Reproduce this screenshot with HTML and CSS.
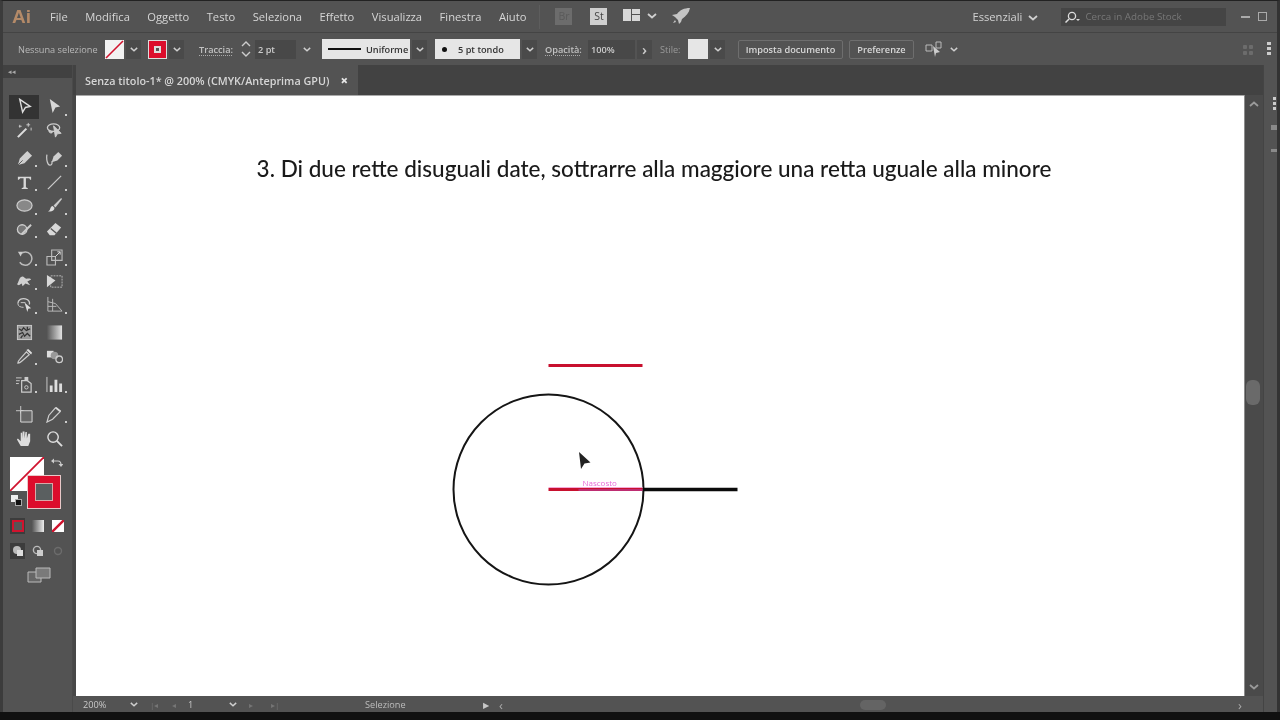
FILE: index.html
```html
<!DOCTYPE html>
<html lang="it">
<head>
  <meta charset="UTF-8">
  <meta name="viewport" content="width=device-width, initial-scale=1.0">
  <title>Adobe Illustrator</title>
  <link rel="stylesheet" href="styles.css">
</head>
<body>
  <svg class="defs">
    <symbol id="chev" viewBox="0 0 10 6"><path d="M1 1l4 3.5L9 1" fill="none" stroke="currentColor" stroke-width="1.8"/></symbol>
  </svg>
  <div class="app">
    <!-- barra menu -->
    <header class="menubar">
      <span class="logo">Ai</span>
      <nav class="menu">
        <span>File</span><span>Modifica</span><span>Oggetto</span><span>Testo</span><span>Seleziona</span><span>Effetto</span><span>Visualizza</span><span>Finestra</span><span>Aiuto</span>
      </nav>
      <i class="vsep"></i>
      <span class="app-badge dim">Br</span>
      <span class="app-badge">St</span>
      <svg class="layout-icon" viewBox="0 0 17 12"><path fill="#d8d8d8" d="M0 0h8v12H0zM9 0h8v5H9zM9 6h8v6H9z"/></svg>
      <svg class="chev chev-layout"><use href="#chev"/></svg>
      <svg class="rocket" viewBox="0 0 18 16"><path fill="#c4c4c4" d="M18 0C12 0 8 2 5 6L0 7l3 2 3 3 1 4 2-2 1-3c4-3 7-6 8-11zM3 12l-2 3 3-1z"/></svg>
      <span class="workspace">Essenziali</span>
      <svg class="chev chev-work"><use href="#chev"/></svg>
      <div class="search">
        <svg viewBox="0 0 16 12"><circle cx="8" cy="5" r="3.6" fill="none" stroke="#ddd" stroke-width="1.3"/><path d="M5 8L1.5 11.5" stroke="#ddd" stroke-width="1.5"/><path d="M12 8h4l-2 2z" fill="#ddd"/></svg>
        <span>Cerca in Adobe Stock</span>
      </div>
      <div class="winctl"><i></i><b></b></div>
    </header>

    <!-- barra opzioni -->
    <section class="options">
      <span class="opt-label sel-label">Nessuna selezione</span>
      <svg class="swatch fill-swatch" viewBox="0 0 19 19"><rect width="19" height="19" fill="#f2f2f2"/><path d="M1 18L18 1" stroke="#d0132e" stroke-width="1.6"/></svg>
      <span class="ddbtn"><svg class="chev"><use href="#chev"/></svg></span>
      <span class="stroke-swatch"><i></i></span>
      <span class="ddbtn"><svg class="chev"><use href="#chev"/></svg></span>
      <span class="opt-label link traccia">Traccia:</span>
      <svg class="stepper" viewBox="0 0 10 18"><path d="M1 6l4-4 4 4M1 12l4 4 4-4" fill="none" stroke="#ccc" stroke-width="1.4"/></svg>
      <span class="field pt-field">2 pt</span>
      <span class="ddbtn pt-dd"><svg class="chev"><use href="#chev"/></svg></span>
      <span class="light-field uniform"><i class="stroke-sample"></i>Uniforme</span>
      <span class="ddbtn"><svg class="chev"><use href="#chev"/></svg></span>
      <span class="light-field brush"><i class="dot"></i>5 pt tondo</span>
      <span class="ddbtn"><svg class="chev"><use href="#chev"/></svg></span>
      <span class="opt-label link opacity">Opacità:</span>
      <span class="field op-field">100%</span>
      <span class="ddbtn arrow-dd">›</span>
      <span class="opt-label style-label">Stile:</span>
      <span class="style-swatch"></span>
      <span class="ddbtn"><svg class="chev"><use href="#chev"/></svg></span>
      <span class="btn doc-btn">Imposta documento</span>
      <span class="btn pref-btn">Preferenze</span>
      <svg class="arrange" viewBox="0 0 18 17"><path fill="none" stroke="#bbb" d="M1 4h6v6H1zM11 1h5v6h-5z"/><path fill="#ccc" d="M8 5l7 6-4 1-1 4z"/></svg>
      <svg class="chev chev-arr"><use href="#chev"/></svg>
      <span class="grip-dots"></span>
      <span class="grip-right"></span>
    </section>

    <main class="work">
      <!-- strumenti -->
      <aside class="toolbar">
        <div class="toolbar-head">◂◂</div>
        <div class="toolbar-grip"></div>

        <div class="tools">
          <span class="tool active"><svg viewBox="0 0 18 18"><path d="M4 1.500l11 7.500-5 1-3 5z" fill="none" stroke="#ddd" stroke-width="1.5"/></svg></span>
          <span class="tool more"><svg viewBox="0 0 18 18"><path d="M4 1l11 8-5 1-3 6z" fill="#d8d8d8"/></svg></span>
          <span class="tool"><svg viewBox="0 0 18 18"><path d="M2 16L11 7" stroke="#ddd" stroke-width="2.2"/><path d="M13 1v4M11 3h4M16 6v3M4 3v3M3 4.500h3" stroke="#ccc"/></svg></span>
          <span class="tool"><svg viewBox="0 0 18 18"><ellipse cx="8" cy="6" rx="6.500" ry="4" fill="none" stroke="#ccc" stroke-width="1.4"/><path d="M3 9c0 3 3 3 4 2M8 4l8 8-4 .5-2 3.500z" fill="#ccc" stroke="#ccc"/></svg></span>
        </div>

        <div class="tools">
          <span class="tool more"><svg viewBox="0 0 18 18"><path d="M2 16l2-7 6-6 5 5-6 6zM10 3l2-2 5 5-2 2" fill="#cfcfcf"/><path d="M2 16l5-5" stroke="#555"/></svg></span>
          <span class="tool more"><svg viewBox="0 0 18 18"><path d="M6 13l2-6 5-5 4 4-5 5z" fill="#cfcfcf"/><path d="M1 5c-1 6 1 11 3 11s3-2 2-4" fill="none" stroke="#ccc" stroke-width="1.3"/></svg></span>
          <span class="tool more"><svg viewBox="0 0 18 18"><path d="M2 3h14v3h-1l-1-1.500h-3.500V14l2 1v1H6v-1l2-1V4.500H4.500L3 6H2z" fill="#d8d8d8"/></svg></span>
          <span class="tool more"><svg viewBox="0 0 18 18"><path d="M2 16L16 2" stroke="#ccc" stroke-width="1.3"/></svg></span>
          <span class="tool more"><svg viewBox="0 0 18 18"><ellipse cx="9" cy="9" rx="8" ry="6" fill="#888" stroke="#ccc" stroke-width="1.3"/></svg></span>
          <span class="tool more"><svg viewBox="0 0 18 18"><path d="M8 9l8-8 1 1-7 9z" fill="#ccc"/><path d="M2 15c3 0 2-5 5-5.500l2 2C9 15 5 16 2 15z" fill="#ddd"/></svg></span>
          <span class="tool more"><svg viewBox="0 0 18 18"><circle cx="6.500" cy="9" r="5" fill="#777" stroke="#ccc" stroke-width="1.400"/><path d="M6 14L16 4" stroke="#ccc" stroke-width="2"/></svg></span>
          <span class="tool more"><svg viewBox="0 0 18 18"><path d="M10 2l6 5-7 8H4l-3-4z" fill="#d8d8d8"/><path d="M5 8l6 5" stroke="#555" stroke-width="1.400"/></svg></span>
        </div>

        <div class="tools">
          <span class="tool more"><svg viewBox="0 0 18 18"><path d="M5 5a7 7 0 1 1-1 9" fill="none" stroke="#bbb" stroke-width="1.600"/><path d="M2 3l5 0-2 5z" fill="#ccc"/></svg></span>
          <span class="tool more"><svg viewBox="0 0 18 18"><path d="M1 8h9v9H1zM6 1h11v11H6z" fill="none" stroke="#bbb" stroke-width="1.200"/><path d="M10 8l5-5M12 3h3v3" fill="none" stroke="#ddd"/></svg></span>
          <span class="tool more"><svg viewBox="0 0 18 18"><path d="M1 12c2-2 2-7 5-8 2-1 3 2 5 2s4-1 5 1l-4 2 3 4-5-2-3 3-1-3-3 2z" fill="#d0d0d0"/></svg></span>
          <span class="tool"><svg viewBox="0 0 18 18"><path d="M5 3h12v12H5z" fill="none" stroke="#bbb" stroke-dasharray="2 1"/><path d="M1 2l9 6-9 7z" fill="#d8d8d8"/></svg></span>
          <span class="tool more"><svg viewBox="0 0 18 18"><path d="M2 8c0-4 4-6 8-5s5 4 4 6" fill="none" stroke="#ccc" stroke-width="1.400"/><path d="M2 8c0 3 3 4 6 4M5 7h5" fill="none" stroke="#ccc"/><path d="M9 7l7 6-3 .5-1 3.500z" fill="#ddd"/></svg></span>
          <span class="tool more"><svg viewBox="0 0 18 18"><path d="M2 1v15h15M2 6l8 2 7 8M2 11h9M7 3v13" fill="none" stroke="#bbb"/></svg></span>
        </div>

        <div class="tools">
          <span class="tool"><svg viewBox="0 0 18 18"><rect x="1.500" y="1.500" width="15" height="15" fill="#999" stroke="#ccc"/><path d="M3 5l3 2 2-3 3 3 4-2M3 11l4-2 2 4 3-3 3 3M5 15l2-3M12 3v3" fill="none" stroke="#333" stroke-width="1.300"/></svg></span>
          <span class="tool"><svg viewBox="0 0 18 18"><defs><linearGradient id="grad"><stop offset="0" stop-color="#555"/><stop offset="1" stop-color="#e2e2e2"/></linearGradient></defs><rect x="1" y="1.500" width="16" height="15" fill="url(#grad)"/></svg></span>
          <span class="tool more"><svg viewBox="0 0 18 18"><path d="M2 16c0-2 1-3 2-4l7-8 3 3-8 7c-1 1-2 2-4 2z" fill="none" stroke="#ccc" stroke-width="1.300"/><path d="M11 2l2-1 4 4-1 2z" fill="#ddd"/></svg></span>
          <span class="tool"><svg viewBox="0 0 18 18"><path d="M1 3h7v7H1z" fill="#ddd"/><circle cx="9" cy="8" r="4" fill="#999"/><circle cx="14" cy="12" r="3.500" fill="none" stroke="#ccc" stroke-width="1.400"/></svg></span>
        </div>

        <div class="tools">
          <span class="tool more"><svg viewBox="0 0 18 18"><path d="M0 2h6M0 5h4M0 8h3" stroke="#ccc"/><path d="M6 5h6l4 3v9H6z" fill="none" stroke="#ccc" stroke-width="1.300"/><path d="M9 1h4v4H9z" fill="#ccc"/><circle cx="11" cy="12" r="1.800" fill="none" stroke="#ccc"/></svg></span>
          <span class="tool more"><svg viewBox="0 0 18 18"><path d="M1 1v16" stroke="#ccc"/><path d="M4 10h3v7H4zM9 4h3v13H9zM14 8h3v9h-3z" fill="#ddd"/></svg></span>
        </div>

        <div class="tools tools-last">
          <span class="tool"><svg viewBox="0 0 18 18"><path d="M5 0v8M0 5h8" stroke="#ccc"/><path d="M5 5h12v12H5z" fill="#666" stroke="#ddd"/></svg></span>
          <span class="tool more"><svg viewBox="0 0 18 18"><path d="M1 17l2-7 7-8 5 4-8 8z" fill="none" stroke="#ccc" stroke-width="1.300"/><path d="M10 2l1-1 5 4-1 1z" fill="#ddd"/></svg></span>
          <span class="tool"><svg viewBox="0 0 18 18"><path d="M5 17l-4-7 1-1 3 3V3h1.500l.5 6V1.500h2V9l1-7h1.500v7l1.500-5H15v8l-2 5z" fill="#ddd"/></svg></span>
          <span class="tool"><svg viewBox="0 0 18 18"><circle cx="7.500" cy="7.500" r="5.500" fill="none" stroke="#ddd" stroke-width="1.500"/><path d="M11.500 11.500L17 17" stroke="#ddd" stroke-width="2"/></svg></span>
        </div>

        <!-- riempimento e traccia -->
        <div class="colors">
          <svg class="color-fill" viewBox="0 0 34 34"><rect width="34" height="34" fill="#fff"/><path d="M0 34L34 0" stroke="#d0132e" stroke-width="1.800"/></svg>
          <span class="color-stroke"><i></i></span>
          <svg class="color-swap" viewBox="0 0 12 12"><path d="M1 3h6c2 0 3 1 3 4" fill="none" stroke="#ccc" stroke-width="1.200"/><path d="M3 0.500v5L0 3zM7.500 6h5L10 9z" fill="#ccc"/></svg>
          <span class="color-default"><i></i><b></b></span>
        </div>

        <div class="mini-row">
          <span class="mini mini-on"><i class="mini-color"></i></span>
          <span class="mini"><i class="mini-grad"></i></span>
          <span class="mini"><svg viewBox="0 0 12 12"><rect width="12" height="12" fill="#fff"/><path d="M0 12L12 0" stroke="#d0132e" stroke-width="2.400"/></svg></span>
        </div>
        <div class="mini-row draw-row">
          <span class="mini mini-on"><svg viewBox="0 0 12 12"><circle cx="5" cy="5" r="4" fill="#bbb"/><rect x="5" y="5" width="6" height="6" fill="#ddd"/></svg></span>
          <span class="mini"><svg viewBox="0 0 12 12"><circle cx="5" cy="5" r="3.600" fill="none" stroke="#bbb" stroke-width="1.400"/><rect x="5" y="5" width="6" height="6" fill="#ccc"/></svg></span>
          <span class="mini"><svg viewBox="0 0 12 12"><circle cx="6" cy="6" r="3.500" fill="none" stroke="#6c6c6c" stroke-width="1.400"/></svg></span>
        </div>
        <svg class="screen-mode" viewBox="0 0 24 16"><path d="M1 5h13v10H1z" fill="#666" stroke="#bbb"/><path d="M9 1h14v10H9z" fill="#7a7a7a" stroke="#bbb"/></svg>
      </aside>

      <div class="doc-area">
        <div class="tabbar">
          <div class="tab"><span>Senza titolo-1* @ 200% (CMYK/Anteprima GPU)</span><b>×</b></div>
        </div>

        <div class="canvas-row">
          <div class="canvas">
            <h1 class="title">3. Di due rette disuguali date, sottrarre alla maggiore una retta uguale alla minore</h1>
            <svg class="drawing" viewBox="76 96 1167 600">
              <path d="M548 365.500H642" stroke="#c8102e" stroke-width="3"/>
              <circle cx="548" cy="489.500" r="95" fill="none" stroke="#151515" stroke-width="2"/>
              <path d="M642 489.500H737" stroke="#0a0a0a" stroke-width="3.400"/>
              <path d="M548 489.500H642" stroke="#c8102e" stroke-width="3"/>
              <path d="M578 490H642" stroke="#b05ad8" stroke-width="1" opacity=".8"/>
              <path d="M548 487.500H642" stroke="#f6a8d8" stroke-width="1"/>
              <text class="hint" x="582" y="486">Nascosto</text>
              <path d="M578.500 452L590 462.500l-6 1-3.500 5.500z" fill="#222"/>
            </svg>
          </div>
          <div class="vscroll">
            <svg class="chev"><use href="#chev"/></svg>
            <i class="vthumb"></i>
            <svg class="chev"><use href="#chev"/></svg>
          </div>
        </div>

        <footer class="status">
          <span class="zoom-val">200%</span>
          <svg class="chev"><use href="#chev"/></svg>
          <span class="nav dim-nav">|◂</span>
          <span class="nav dim-nav">◂</span>
          <span class="page-val">1</span>
          <svg class="chev"><use href="#chev"/></svg>
          <span class="nav dim-nav">▸</span>
          <span class="nav dim-nav">▸|</span>
          <span class="status-tool">Selezione</span>
          <span class="play">▶</span>
          <span class="hscroll">
            <span class="h-left">‹</span>
            <i class="hthumb"></i>
            <span class="h-right">›</span>
          </span>
        </footer>
      </div>

      <!-- pannelli chiusi -->
      <aside class="dock">
        <i class="dock-dots"></i>
        <i class="dock-line"></i>
        <i class="dock-line dock-line2"></i>
      </aside>
    </main>
    <div class="taskbar"></div>
  </div>
</body>
</html>
```

FILE: styles.css
```css
* { box-sizing: border-box; }
html, body {
  margin: 0;
  height: 100%;
  overflow: hidden;
  background: #111;
}
body {
  font-family: "Open Sans", "Liberation Sans", sans-serif;
  color: #dcdcdc;
}
.defs { position: absolute; width: 0; height: 0; }
.app {
  display: flex;
  flex-direction: column;
  width: 1280px;
  height: 720px;
  filter: blur(0.6px);
  border-left: 3px solid #3c3c3c;
  border-right: 3px solid #333;
  border-top: 1px solid #222;
  background: #535353;
}
.chev {
  width: 10px;
  height: 6px;
  color: #cfcfcf;
  flex: none;
}

/* barra menu */
.menubar {
  display: flex;
  align-items: center;
  height: 32px;
  flex: none;
  border-bottom: 1px solid #444;
  font-size: 11.2px;
}
.logo {
  margin-left: 9px;
  width: 38px;
  font: bold 19px "Liberation Sans", sans-serif;
  color: #b48a68;
}
.menu { display: flex; gap: 17.5px; color: #d6d6d6; white-space: nowrap; }
.vsep { width: 1px; height: 24px; margin-left: 13px; background: #5d5d5d; }
.app-badge {
  width: 17px;
  height: 17px;
  margin-left: 15px;
  background: #cfcfcf;
  color: #444;
  font-size: 10.5px;
  line-height: 17px;
  text-align: center;
}
.app-badge + .app-badge { margin-left: 18px; }
.app-badge.dim { background: #6c6c6c; color: #5a5a5a; }
.layout-icon { width: 17px; height: 12px; margin: -3px 0 0 16px; }
.chev-layout { margin: -2px 0 0 7px; }
.rocket { width: 18px; height: 16px; margin: -2px 0 0 15px; }
.workspace { margin-left: 282px; width: 48px; font-size: 11.2px; color: #d2d2d2; }
.chev-work { margin: 2px 0 0 8px; }
.search {
  display: flex;
  align-items: center;
  gap: 5px;
  width: 165px;
  height: 18px;
  margin-left: 23px;
  padding-left: 3px;
  background: #454545;
  color: #777;
  font-size: 9.8px;
}
.search svg { width: 16px; height: 12px; }
.winctl {
  display: flex;
  gap: 8px;
  margin-left: 15px;
  align-items: center;
}
.winctl i { width: 9px; height: 2px; background: #aaa; }
.winctl b { width: 9px; height: 9px; border: 1px solid #aaa; }

/* barra opzioni */
.options {
  display: flex;
  align-items: center;
  height: 32px;
  flex: none;
  font-size: 9.2px;
  font-weight: 600;
}
.opt-label { color: #c2c2c2; white-space: nowrap; }
.link { text-decoration: underline dotted #aaa; text-underline-offset: 2px; }
.sel-label { margin-left: 15px; width: 87px; color: #b8b8b8; font-weight: 400; }
.swatch { width: 19px; height: 19px; flex: none; }
.ddbtn {
  display: flex;
  align-items: center;
  justify-content: center;
  width: 15px;
  height: 19px;
  margin-left: 2px;
  background: #4a4a4a;
  flex: none;
}
.ddbtn .chev { width: 8px; height: 5px; }
.stroke-swatch {
  display: flex;
  align-items: center;
  justify-content: center;
  width: 19px;
  height: 19px;
  margin-left: 7px;
  background: #dc0d2c;
  border: 1px solid #ddd;
  flex: none;
}
.stroke-swatch i { width: 7px; height: 7px; border: 2px solid #ddd; background: #555; }
.traccia { margin-left: 15px; width: 33px; }
.stepper { width: 10px; height: 18px; margin-left: 9px; flex: none; }
.field {
  display: flex;
  align-items: center;
  height: 19px;
  padding-left: 3px;
  background: #484848;
  color: #ccc;
  flex: none;
}
.pt-field { width: 41px; margin-left: 4px; }
.pt-dd { margin-left: 3px; background: none; }
.light-field {
  display: flex;
  align-items: center;
  height: 20px;
  background: #e6e6e6;
  color: #333;
  flex: none;
}
.uniform { width: 88px; margin-left: 8px; padding-left: 6px; }
.stroke-sample { width: 33px; height: 2px; margin-right: 5px; background: #111; }
.brush { width: 85px; margin-left: 8px; padding-left: 7px; }
.dot { width: 5px; height: 5px; margin-right: 11px; border-radius: 50%; background: #111; }
.opacity { margin-left: 8px; width: 36px; }
.op-field { width: 47px; margin-left: 7px; }
.arrow-dd { font-size: 15px; line-height: 19px; color: #ccc; }
.style-label { margin-left: 8px; width: 28px; color: #999; font-weight: 400; }
.style-swatch { width: 20px; height: 20px; background: #e6e6e6; flex: none; }
.btn {
  display: flex;
  align-items: center;
  justify-content: center;
  height: 19px;
  border: 1px solid #6e6e6e;
  border-radius: 2px;
  color: #d8d8d8;
  flex: none;
}
.doc-btn { width: 105px; margin-left: 13px; }
.pref-btn { width: 65px; margin-left: 6px; }
.arrange { width: 18px; height: 17px; margin-left: 11px; flex: none; }
.chev-arr { margin-left: 7px; width: 8px; height: 5px; }
.grip-dots {
  width: 11px;
  height: 11px;
  margin-left: 284px;
  background: radial-gradient(circle, #6c6c6c 2px, transparent 2.5px) 0 0 / 6px 6px;
  flex: none;
}
.grip-right {
  width: 4px;
  height: 14px;
  margin-left: 14px;
  background: repeating-linear-gradient(#ccc 0 3px, transparent 3px 5px);
  flex: none;
}

/* area di lavoro */
.work {
  display: flex;
  flex: 1;
  min-height: 0;
}
.toolbar {
  display: flex;
  flex-direction: column;
  width: 70px;
  flex: none;
  background: #535353;
  border-right: 1px solid #4a4a4a;
}
.toolbar-head {
  height: 13px;
  padding-left: 5px;
  background: #414141;
  color: #aaa;
  font-size: 7px;
  line-height: 13px;
}
.toolbar-grip { height: 17px; }
.tools {
  display: grid;
  grid-template-columns: 30px 30px;
  grid-auto-rows: 23.7px;
  margin: 0 0 4.3px 6px;
}
.tools-last { margin-top: 2px; }
.tool {
  position: relative;
  display: flex;
  align-items: center;
  justify-content: center;
}
.tool svg { width: 17px; height: 17px; }
.tool.active { background: #333; }
.tool.more::after {
  content: "";
  position: absolute;
  right: 2px;
  bottom: 3px;
  width: 2px;
  height: 2px;
  background: #ccc;
}

/* colori */
.colors {
  position: relative;
  height: 54px;
  margin-top: 3px;
}
.color-fill {
  position: absolute;
  left: 7px;
  top: 0;
  width: 34px;
  height: 34px;
}
.color-stroke {
  position: absolute;
  left: 24px;
  top: 18px;
  display: flex;
  align-items: center;
  justify-content: center;
  width: 34px;
  height: 34px;
  background: #dc0d2c;
  border: 1px solid #e8c8c8;
}
.color-stroke i {
  width: 18px;
  height: 18px;
  background: #5a5f60;
  border: 1px solid #d8a8a8;
}
.color-swap {
  position: absolute;
  left: 48px;
  top: 1px;
  width: 12px;
  height: 12px;
}
.color-default { position: absolute; left: 8px; top: 38px; width: 11px; height: 11px; }
.color-default i { position: absolute; left: 0; top: 0; width: 7px; height: 7px; background: #eee; }
.color-default b { position: absolute; right: 0; bottom: 0; width: 7px; height: 7px; background: #111; border: 1px solid #aaa; }
.mini-row {
  display: flex;
  margin: 7px 0 0 7px;
  gap: 5px;
}
.draw-row { margin-top: 9px; }
.mini {
  display: flex;
  align-items: center;
  justify-content: center;
  width: 15px;
  height: 16px;
}
.mini svg { width: 12px; height: 12px; }
.mini-on { background: #3c3c3c; }
.mini-color { width: 12px; height: 12px; background: #555; border: 2px solid #d0132e; }
.mini-grad { width: 12px; height: 12px; background: linear-gradient(90deg, #555, #eee); }
.screen-mode { width: 24px; height: 16px; margin: 8px 0 0 24px; }

/* documento */
.doc-area {
  display: flex;
  flex-direction: column;
  flex: 1;
  min-width: 0;
  padding-left: 3px;
  background: #474747;
}
.tabbar {
  height: 30px;
  margin-left: -3px;
  padding-left: 3px;
  background: #424242;
  flex: none;
}
.tab {
  display: flex;
  align-items: center;
  width: 282px;
  height: 30px;
  padding-left: 9px;
  background: #535353;
  font-size: 10.8px;
  font-weight: 600;
  color: #d6d6d6;
  white-space: nowrap;
}
.tab b { margin-left: 11px; font-size: 13px; color: #e6e6e6; }
.canvas-row {
  display: flex;
  flex: 1;
  min-height: 0;
}
.canvas {
  position: relative;
  flex: 1;
  background: #fff;
  border-top: 1px solid #aaa;
  overflow: hidden;
}
.title {
  margin: 58px 0 0;
  padding-right: 12px;
  text-align: center;
  font-family: "Lato", "Open Sans", sans-serif;
  font-size: 22.5px;
  font-weight: 500;
  line-height: 29px;
  color: #1a1a1a;
  white-space: nowrap;
}
.drawing {
  position: absolute;
  left: 0;
  top: 0;
  width: 100%;
  height: 100%;
}
.hint { font-size: 8px; fill: #e86ad8; }
.vscroll {
  position: relative;
  display: flex;
  flex-direction: column;
  align-items: center;
  justify-content: space-between;
  width: 19px;
  padding: 6px 4px;
  background: #4a4a4a;
  border-left: 1px solid #8c8c8c;
  flex: none;
}
.vscroll .chev:first-child { transform: rotate(180deg); }
.vscroll .chev { color: #9a9a9a; }
.vthumb {
  position: absolute;
  left: 1px;
  top: 285px;
  width: 14px;
  height: 25px;
  border-radius: 6px;
  background: #6a6a6a;
}

/* barra di stato */
.status {
  position: relative;
  display: flex;
  align-items: center;
  height: 16px;
  margin-left: -3px;
  padding: 1px 0 0 10px;
  background: #535353;
  font-size: 9.2px;
  color: #c8c8c8;
  flex: none;
}
.zoom-val { width: 47px; }
.status .chev { width: 8px; height: 5px; }
.nav { margin-left: 12px; width: 10px; font-size: 8px; }
.dim-nav { color: #757575; }
.page-val { margin-left: 6px; width: 41px; }
.status-tool { margin-left: 84px; width: 118px; color: #bdbdbd; }
.play { width: 14px; font-size: 8px; }
.hscroll {
  display: flex;
  align-items: center;
  width: 743px;
  margin-left: 2px;
  font-size: 13px;
  line-height: 14px;
  color: #aaa;
}
.hthumb {
  width: 26px;
  height: 10px;
  margin-left: 357px;
  border-radius: 5px;
  background: #646464;
}
.h-right { margin-left: auto; }

/* dock */
.dock {
  position: relative;
  width: 14px;
  background: #535353;
  border-left: 1px solid #444;
  flex: none;
}
.dock-dots {
  position: absolute;
  left: 9px;
  top: 32px;
  width: 3px;
  height: 14px;
  background: repeating-linear-gradient(#ccc 0 3px, transparent 3px 5px);
}
.dock-line {
  position: absolute;
  left: 7px;
  top: 60px;
  width: 6px;
  height: 5px;
  background: #8a8a8a;
}
.dock-line2 { top: 84px; height: 3px; }
.taskbar {
  height: 8px;
  background: #111;
  flex: none;
  margin: 0 -3px;
}
```
